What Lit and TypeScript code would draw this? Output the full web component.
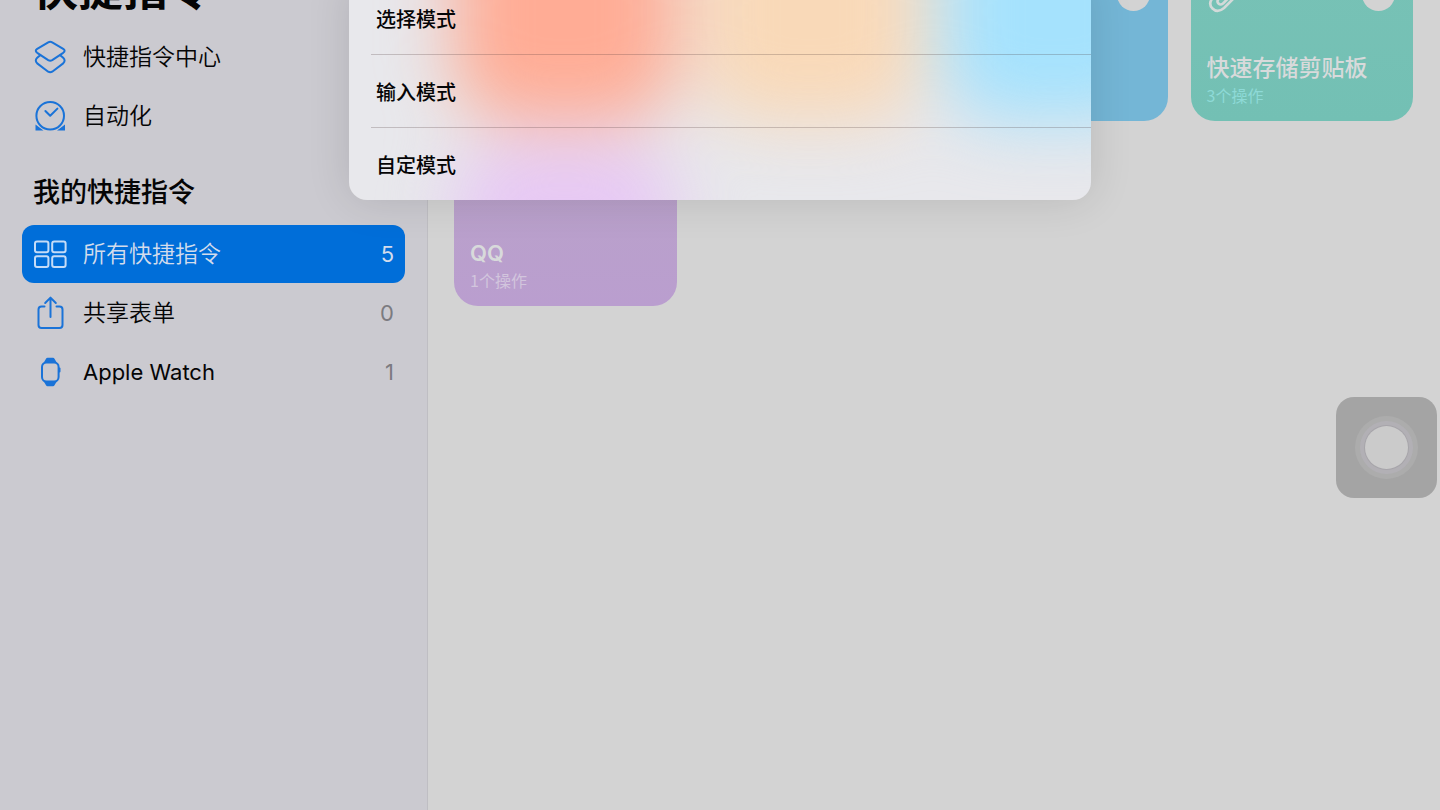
import { LitElement, html, css, svg, nothing } from "lit";
import { customElement } from "lit/decorators.js";
import { classMap } from "lit/directives/class-map.js";

const icons: Record<string, unknown> = {
  layers: svg`<path d="M19.200 2.300 30.200 8.800Q33 10.700 30.200 12.800L19.200 20.200Q17.200 21.400 15.200 20.200L4.200 12.800Q1.400 10.700 4.200 8.800L15.200 2.300Q17.200 1.200 19.200 2.300Z"/><path d="M7.200 15.200 4.200 17.800Q1.400 20.500 4.200 23.400L15.200 31.700Q17.200 33 19.200 31.700L30.200 23.400Q33 20.500 30.200 17.800L27.200 15.200"/>`,
  clock: svg`<path class="solid" d="M2.500 25.500 10.500 31.500H2.500ZM32 25.500V31.500H24Z"/><circle class="halo" cx="17.200" cy="16.800" r="15.500"/><circle cx="17.200" cy="16.800" r="13.800"/><path d="m12.400 12 4.800 4.800 7.200-7.200"/>`,
  grid: svg`<rect x="2" y="4.500" width="13.400" height="10.800" rx="2"/><rect x="19.200" y="4.500" width="13.400" height="10.800" rx="2"/><rect x="2" y="19.200" width="13.400" height="10.800" rx="2"/><rect x="19.200" y="19.200" width="13.400" height="10.800" rx="2"/>`,
  share: svg`<path d="M11.500 10.500H8.500Q5.500 10.500 5.500 13.500V29Q5.500 32 8.500 32H26.500Q29.500 32 29.500 29V13.500Q29.500 10.500 26.500 10.500H23.500M17.500 21V2M12.200 7 17.500 1.600l5.300 5.400"/>`,
  watch: svg`<rect x="9" y="7.500" width="16.600" height="19" rx="4.500"/><path class="solid" d="M10.500 8 13 3.800Q13.500 2.800 14.500 2.800H20Q21 2.800 21.500 3.800L24 8ZM10.500 26l2.500 4.200Q13.500 31.200 14.500 31.200H20Q21 31.200 21.500 30.200L24 26Z"/><path d="M26.500 13.500v3"/>`,
};

const icon = (name: string) =>
  html`<svg class="icon" viewBox="0 0 34 34" aria-hidden="true">${icons[name]}</svg>`;

interface NavItem { icon: string; label: string; count?: number; active?: boolean; latin?: boolean }
interface Shortcut { tone: string; name?: string; steps?: number; clip?: boolean; latin?: boolean }

const browse: NavItem[] = [
  { icon: "layers", label: "快捷指令中心" },
  { icon: "clock", label: "自动化" },
];
const mine: NavItem[] = [
  { icon: "grid", label: "所有快捷指令", count: 5, active: true },
  { icon: "share", label: "共享表单", count: 0 },
  { icon: "watch", label: "Apple Watch", count: 1, latin: true },
];
const shortcuts: Shortcut[] = [
  { tone: "red" },
  { tone: "orange" },
  { tone: "blue" },
  { tone: "green", name: "快速存储剪贴板", steps: 3, clip: true },
  { tone: "purple", name: "QQ", steps: 1, latin: true },
];
const modes = ["选择模式", "输入模式", "自定模式"];

@customElement("app-root")
export class AppRoot extends LitElement {
  static styles = css`
    :host {
      display: flex;
      position: relative;
      height: 100vh;
      overflow: hidden;
      background: #d3d3d3;
      color: #050506;
      font-family: Inter, "Noto Sans CJK SC", sans-serif;
    }
    * { box-sizing: border-box; }
    button { border: 0; background: none; font: inherit; color: inherit; padding: 0; text-align: left; }
    .sidebar {
      flex: none;
      width: 428px;
      padding: 0 22px;
      background: #cbcad0;
      border-right: 1px solid #bfbec3;
    }
    .title { margin: -40px 0 8px; padding-left: 11px; font-size: 45px; line-height: 60px; font-weight: 700; }
    .heading { margin: 32px 0 16px; padding-left: 11px; font-size: 27px; line-height: 32px; font-weight: 500; }
    .list { display: grid; gap: 1px; }
    .item {
      display: flex;
      align-items: center;
      gap: 16px;
      height: 58px;
      padding: 0 11px;
      border-radius: 12px;
      font-size: 23px;
      line-height: 32px;
      font-weight: 350;
      text-decoration: none;
      color: inherit;
    }
    .label { flex: 1; }
    .count { color: #7c7b80; font-size: 22px; font-weight: 400; }
    .label.latin, .name.latin { font-size: 22px; }
    .label.latin { font-weight: 400; }
    .name.latin { font-weight: 600; }
    .icon {
      flex: none;
      width: 34px;
      height: 34px;
      fill: none;
      stroke: #1a73d8;
      stroke-width: 2;
      stroke-linecap: round;
      stroke-linejoin: round;
    }
    .icon .solid { fill: #1a73d8; stroke: none; }
    .icon .halo { fill: #cbcad0; stroke: none; }
    .active { background: #006ed9; color: #d3dcec; }
    .active .count { color: inherit; }
    .active .icon { stroke: #c5dcf7; }
    .main { flex: 1; min-width: 0; margin-top: -41px; padding: 0 27px 0 26px; }
    .grid { display: grid; grid-template-columns: repeat(4, 1fr); gap: 23px; }
    .card {
      position: relative;
      display: flex;
      flex-direction: column;
      justify-content: flex-end;
      height: 162px;
      padding: 14px 16px;
      border-radius: 24px;
      color: #d8dadb;
    }
    .red { background: #d07560; }
    .orange { background: #d9b998; }
    .blue { background: #74b6d6; }
    .green { background: linear-gradient(#78c2b6, #73c0b4); }
    .purple { background: linear-gradient(#b9a2c8, #ba9ecf); }
    .name { font-size: 23px; line-height: 30px; font-weight: 500; }
    .steps { font-family: "Noto Sans CJK SC", sans-serif; font-size: 16px; line-height: 24px; color: #d2c5dd; }
    .green .steps { color: #8edad7; }
    .more { position: absolute; top: 19px; right: 18px; width: 33px; height: 33px; border-radius: 50%; background: #d3d3d3; }
    .clip {
      position: absolute; top: 17px; left: 16px; width: 36px; height: 36px; overflow: visible;
      fill: none; stroke: #d3dad9; stroke-width: 2.600; stroke-linecap: round; stroke-linejoin: round;
    }
    .sheet {
      position: absolute;
      top: -18px;
      left: 50%;
      transform: translateX(-50%);
      width: 742px;
      max-width: 90%;
      border-radius: 0 0 18px 18px;
      overflow: hidden;
      background: #e8e8ec;
      box-shadow: 0 0 44px rgba(0, 0, 0, 0.12);
    }
    .glow {
      position: absolute;
      inset: -80px -75px -80px 105px;
      display: grid;
      grid-template: 219px 1fr / repeat(3, 1fr);
      gap: 23px;
      filter: blur(34px);
    }
    .glow div { border-radius: 60px; }
    .glow .warm { background: #ffac95; }
    .glow .sand { background: #f9d9b8; }
    .glow .sky { background: #a5e2fd; }
    .glow .lilac { background: #e7c8f4; }
    .mode { position: relative; display: flex; width: 100%; padding-left: 22px; }
    .mode span { flex: 1; padding: 22px 5px 18px; font-size: 20px; line-height: 32px; font-weight: 500; border-bottom: 1px solid rgba(70, 50, 50, 0.24); }
    .mode:last-child span { border-bottom: 0; }
    .touch {
      position: absolute;
      top: 397px;
      right: 3px;
      display: grid;
      place-items: center;
      width: 101px;
      height: 101px;
      border-radius: 18px;
      background: #a4a4a4;
    }
    .knob { width: 43px; height: 43px; border-radius: 50%; background: #cbcbcb; box-shadow: 0 0 0 1px #a7a5aa, 0 0 0 5px #b2b0b5, 0 0 0 10px #acacac; }
  `;

  private nav(items: NavItem[]) {
    return html`<nav class="list">
      ${items.map(
        (i) => html`<a href="#" class=${classMap({ item: true, active: !!i.active })}>
          ${icon(i.icon)}<span class=${classMap({ label: true, latin: !!i.latin })}>${i.label}</span>
          ${i.count === undefined ? nothing : html`<span class="count">${i.count}</span>`}
        </a>`
      )}
    </nav>`;
  }

  private card(s: Shortcut) {
    return html`<article class="card ${s.tone}">
      ${s.clip
        ? html`<svg class="clip" viewBox="0 0 36 36" aria-hidden="true"><path d="M20 14 11.500 23Q9.500 25.500 11.500 27.500Q13.500 29.500 16 27.500L28 15.500Q32 11 28.500 7Q24.500 3.500 20 7.500L6.500 21Q0.500 27.500 5.500 32.500Q10.500 37.500 17 32L27.500 21.500"/></svg>`
        : nothing}
      <button class="more" aria-label="更多"></button>
      ${s.name
        ? html`<div class=${classMap({ name: true, latin: !!s.latin })}>${s.name}</div>
            <div class="steps">${s.steps}个操作</div>`
        : nothing}
    </article>`;
  }

  render() {
    return html`
      <aside class="sidebar">
        <h1 class="title">快捷指令</h1>
        ${this.nav(browse)}
        <h2 class="heading">我的快捷指令</h2>
        ${this.nav(mine)}
      </aside>
      <main class="main"><div class="grid">${shortcuts.map((s) => this.card(s))}</div></main>
      <section class="sheet">
        <div class="glow" aria-hidden="true">
          <div class="warm"></div><div class="sand"></div><div class="sky"></div><div class="lilac"></div>
        </div>
        ${modes.map((m) => html`<button class="mode"><span>${m}</span></button>`)}
      </section>
      <button class="touch" aria-label="辅助触控"><span class="knob"></span></button>
    `;
  }
}
